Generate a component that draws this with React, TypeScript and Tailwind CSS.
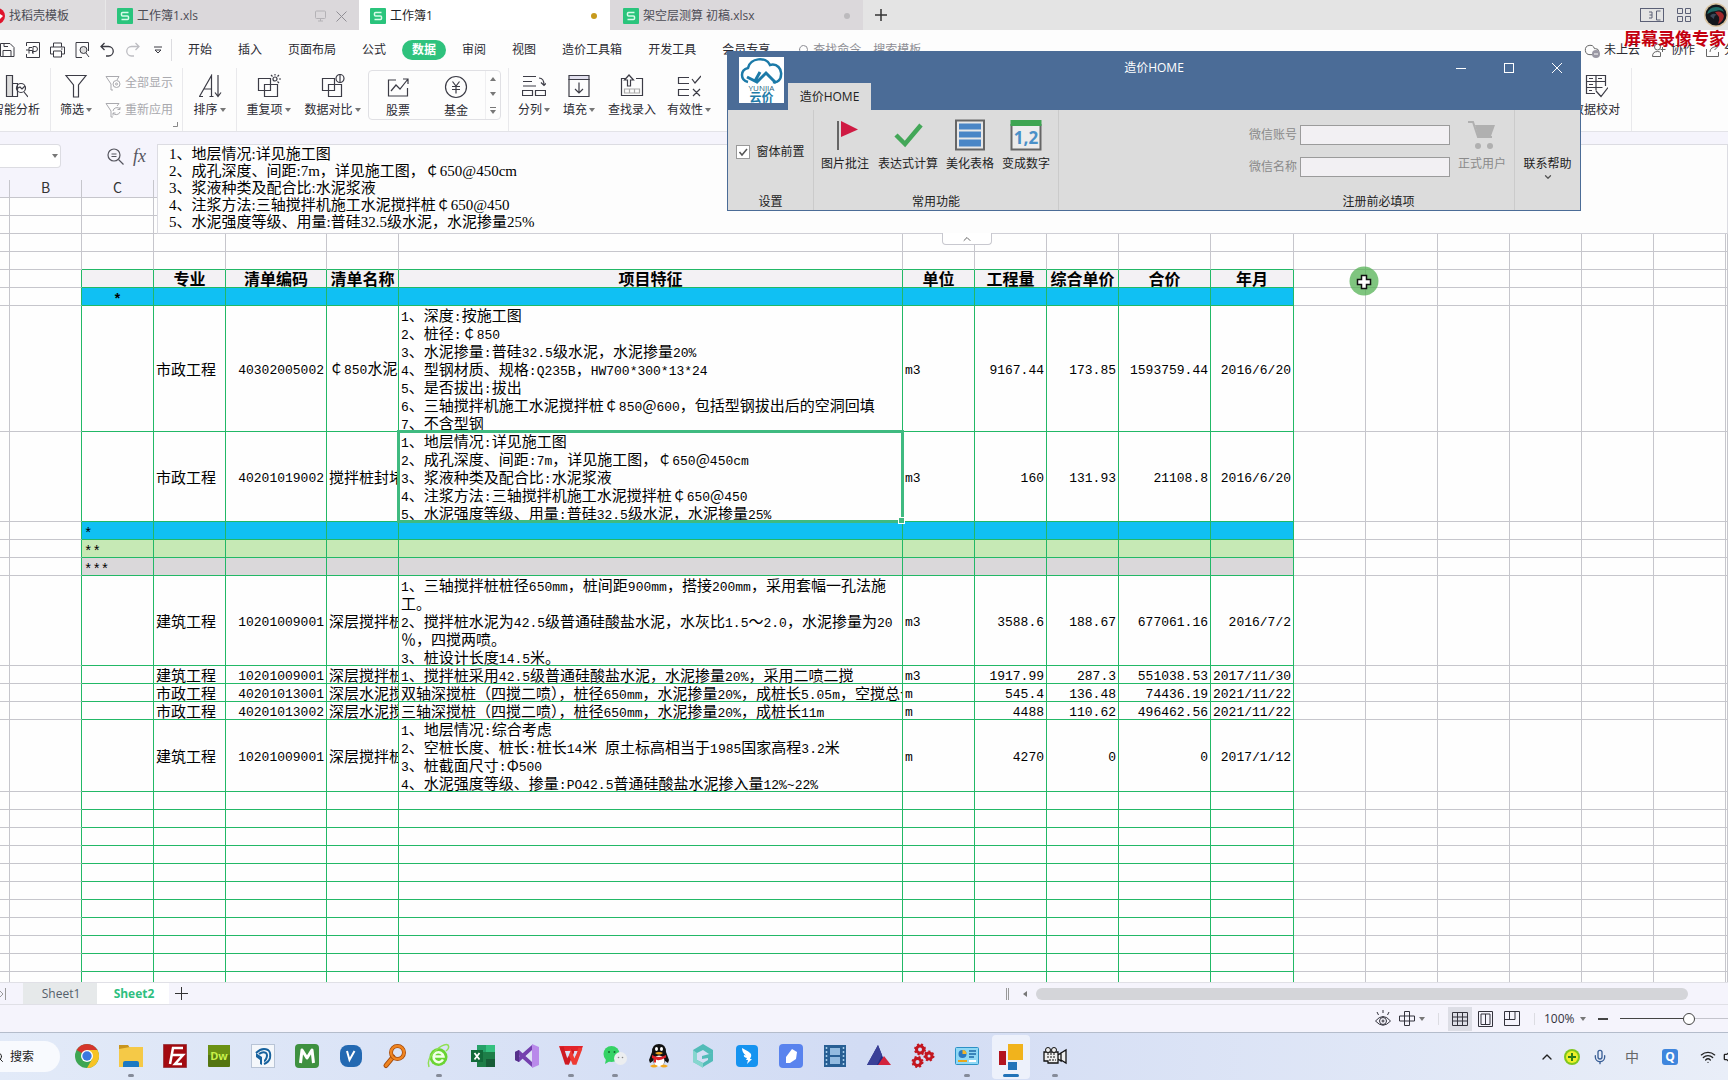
import React from 'react';
import { Cloud, Mic, Wifi, Volume2, Search, ChevronUp, ChevronDown } from 'lucide-react';

const UI_FONT = "font-['Open_Sans','Noto_Sans_CJK_SC',sans-serif]";
const LINE = { fill: 'none', stroke: 'currentColor' } as const;

/* ---------- small shared pieces ---------- */

const Caret = ({ className = '' }: { className?: string }) => (
  <svg className={`w-[6px] h-1 shrink-0 text-[#777] ${className}`} viewBox="0 0 6 4">
    <path d="M0 0h6L3 4z" fill="currentColor" />
  </svg>
);

const SheetLogo = () => (
  <svg className="w-4 h-4 shrink-0" viewBox="0 0 16 16">
    <rect width="16" height="16" rx="1" fill="#2ac47c" />
    <path d="M11.500 4.500h-6a1 1 0 0 0-1 1V7a1 1 0 0 0 1 1h5a1 1 0 0 1 1 1v1.500a1 1 0 0 1-1 1h-6" fill="none" stroke="#d8fbe8" strokeWidth="1.500" />
  </svg>
);

const Divider = ({ className = 'h-16' }: { className?: string }) => (
  <div className={`w-px shrink-0 bg-[#e9e9ec] ${className}`} />
);

/* ---------- document tabs ---------- */

const TabBar = () => (
  <div className="flex h-[30px] shrink-0 bg-[#e4e4e4] text-xs text-[#4c4c55] overflow-hidden">
    <button className="flex items-center w-[106px] shrink-0 pt-[2px] bg-[#dedcde] border-r border-[#e8e8e8]">
      <svg className="w-[5px] h-4 mr-1" viewBox="0 0 5 16">
        <circle cx="-3" cy="8" r="8" fill="#e0142c" />
        <path d="M0 6l3 2-3 3z" fill="#fff" />
      </svg>
      找稻壳模板
    </button>
    <div className="flex items-center w-[253px] shrink-0 bg-[#dbd8db] pt-[2px] pl-[11px] pr-3">
      <SheetLogo />
      <button className="ml-1">工作簿1.xls</button>
      <svg className="w-[11px] h-3 ml-auto text-[#b4b2b6]" viewBox="0 0 11 12" {...LINE}>
        <rect x=".5" y="1" width="10" height="7.500" rx="1" />
        <path d="M3 11h5M5.500 8.500V11" />
      </svg>
      <button aria-label="关闭" className="ml-[10px]">
        <svg className="w-[11px] h-[11px] text-[#908e94]" viewBox="0 0 11 11" {...LINE}>
          <path d="M.5.5l10 10M10.500.5l-10 10" />
        </svg>
      </button>
    </div>
    <div className="flex items-center w-[251px] shrink-0 bg-white text-[#1f1f24] pt-[2px] pl-[11px] pr-[13px]">
      <SheetLogo />
      <button className="ml-1">工作簿1</button>
      <span className="w-[6px] h-[6px] ml-auto rounded-full bg-[#c79a1c]" />
    </div>
    <div className="flex items-center w-[253px] shrink-0 bg-[#dbd8db] pt-[2px] pl-[13px] pr-[13px]">
      <SheetLogo />
      <button className="ml-1">架空层测算 初稿.xlsx</button>
      <span className="w-[6px] h-[6px] ml-auto rounded-full bg-[#bcbabd]" />
    </div>
    <button aria-label="新建" className="ml-3">
      <svg className="w-3 h-3 text-[#333]" viewBox="0 0 12 12" {...LINE} strokeWidth="1.500">
        <path d="M6 0v12M0 6h12" />
      </svg>
    </button>
    <div className="flex items-center ml-auto w-[88px] shrink-0 text-[#5b6076]">
      <svg className="w-6 h-[14px] shrink-0" viewBox="0 0 24 14" {...LINE}>
        <rect x=".5" y=".5" width="23" height="13" />
        <path d="M20.500 3h-4v9h4" />
        <path d="M9 4h3v6H9M9.500 7H12" />
      </svg>
      <svg className="w-[14px] h-[14px] ml-[13px] shrink-0" viewBox="0 0 14 14" {...LINE}>
        <path d="M.5.5h5v5h-5zM8.500.5h5v5h-5zM.5 8.500h5v5h-5zM8.500 8.500h5v5h-5z" />
      </svg>
      <svg className="w-6 h-6 ml-[13px] shrink-0" viewBox="0 0 24 24">
        <circle cx="12" cy="12" r="12" fill="#d8c3a0" />
        <circle cx="12" cy="12" r="10.500" fill="#12161c" />
        <path d="M3 11q2-7 9-7 6 0 8 5-4-3-8-1-4 0-9 3z" fill="#1c6b66" />
        <path d="M11 9q7-2 9 4-1 6-6 8 2-4 1-7z" fill="#a2282b" />
        <path d="M6 13q3-4 7-1-3 0-3 4z" fill="#3b4858" />
      </svg>
    </div>
  </div>
);

/* ---------- menu row ---------- */

const MENU_LEFT = ['开始', '插入', '页面布局', '公式'];
const MENU_RIGHT = ['审阅', '视图', '造价工具箱', '开发工具', '会员专享'];

const MenuRow = () => (
  <div className="flex items-center h-[38px] pt-[2px] shrink-0 text-xs text-[#2b2b33] overflow-hidden">
    <div className="flex items-center w-[172px] h-[22px] shrink-0 border-r border-[#dcdce0] text-[#3a3a42]">
      <svg className="w-[15px] h-4" viewBox="0 0 15 16" {...LINE}>
        <path d="M.5 14.500V1.500h9.500l4 4v9H.5M3 14V8.500h8V14M4 1.500v3h4" />
      </svg>
      <svg className="w-[15px] h-4 ml-[10px]" viewBox="0 0 15 16" {...LINE}>
        <path d="M1.500 4V.5h13v15h-13V12M1 8h3M4 11.500V5.500h3M4 8.500h3.500V11M8 12V4.500h2a2.500 2.500 0 0 1 0 5H8" />
      </svg>
      <svg className="w-[15px] h-4 ml-[10px]" viewBox="0 0 15 16" {...LINE}>
        <path d="M3.500 5V1h8v4M3.500 12H.5V5h14v7h-3M3.500 9h8v6h-8zM11 7h1.500" />
      </svg>
      <svg className="w-[15px] h-4 ml-[10px]" viewBox="0 0 15 16" {...LINE}>
        <path d="M7 15.500H1V.5h12.500V9" />
        <circle cx="8.500" cy="8" r="3.500" fill="#ddd" />
        <path d="M11 11l3 4" />
      </svg>
      <svg className="w-[14px] h-4 ml-[10px]" viewBox="0 0 14 16" {...LINE} strokeWidth="1.300">
        <path d="M4.500 1L1 4.500 4.500 8M1 4.500h7.500a4.700 4.700 0 0 1 0 9.500H6" />
      </svg>
      <svg className="w-[14px] h-4 ml-3 text-[#bdbdc2]" viewBox="0 0 14 16" {...LINE} strokeWidth="1.300">
        <path d="M9.500 1L13 4.500 9.500 8M13 4.500H5.500a4.700 4.700 0 0 0 0 9.500H8" />
      </svg>
      <svg className="w-2 h-2 ml-[14px]" viewBox="0 0 8 8" {...LINE}>
        <path d="M0 1h8M1 4h6L4 7z" />
      </svg>
    </div>
    <nav className="flex items-center gap-[26px] pl-4 shrink-0">
      {MENU_LEFT.map((name) => (
        <button key={name}>{name}</button>
      ))}
      <button className="h-5 px-[10px] -mx-[10px] rounded-full bg-[#2fc27d] text-white font-bold">数据</button>
      {MENU_RIGHT.map((name) => (
        <button key={name}>{name}</button>
      ))}
    </nav>
    <label className="flex items-center ml-[27px] text-[#8d8d94]">
      <Search className="w-3 h-3 mr-1 -scale-x-100" strokeWidth={2} />
      <input className="w-[110px] outline-none placeholder:text-[#8d8d94]" placeholder="查找命令、搜索模板" />
    </label>
    <div className="flex items-center ml-auto w-[144px] shrink-0 whitespace-nowrap overflow-hidden [&>*]:shrink-0">
      <span className="relative w-4 h-4 mr-1 text-[#666]">
        <Cloud className="w-4 h-4" strokeWidth={1.5} />
        <svg className="absolute right-0 bottom-0 w-2 h-2" viewBox="0 0 8 8">
          <circle cx="4" cy="4" r="4" fill="#9a98a4" />
          <path d="M2 4h4" stroke="#fff" />
        </svg>
      </span>
      <button>未上云</button>
      <svg className="w-[14px] h-[14px] ml-3 mr-[5px] text-[#666]" viewBox="0 0 14 14" {...LINE}>
        <circle cx="5.500" cy="4" r="3" />
        <path d="M.5 13.500q0-5 5-5 2 0 3 1v4zM10.500 4v5M8.500 6.500h5" />
      </svg>
      <button>协作</button>
      <svg className="w-[14px] h-[14px] ml-[11px] mr-1 text-[#666]" viewBox="0 0 14 14" {...LINE}>
        <path d="M.5 6v7.500h12V9M4 9q0-5 7-5.500M8.500.5L12 3.500 8.500 7" />
      </svg>
      <button>分享</button>
    </div>
  </div>
);

/* ---------- ribbon ---------- */

interface ToolProps {
  label: string;
  width: string;
  caret?: boolean;
  children: React.ReactNode;
}

const Tool = ({ label, width, caret, children }: ToolProps) => (
  <button className={`flex flex-col items-center shrink-0 pt-[6px] whitespace-nowrap ${width}`}>
    <svg className="w-6 h-6 text-[#3c3c46]" viewBox="0 0 24 24" {...LINE} strokeWidth="1.200">
      {children}
    </svg>
    <span className="flex items-center justify-center mt-1 text-xs leading-4 text-[#2b2b33]">
      {label}
      {caret && <Caret className="ml-[2px]" />}
    </span>
  </button>
);

const Ribbon = () => (
  <div className="flex h-16 shrink-0 border-b border-[#e3e3e8] overflow-hidden">
    <div className="flex w-[50px] shrink-0 justify-end">
      <Tool label="智能分析" width="w-[68px]">
        <path d="M2.500 1.500h6v21h-6z" fill="#ddd" />
        <path d="M8.500 9.500h5v13h-5" />
        <circle cx="17" cy="14" r="4.500" />
        <path d="M20 18l4 5M12 15l4-2 2 2 3-3" />
      </Tool>
    </div>
    <Divider />
    <Tool label="筛选" width="w-[50px]" caret>
      <path d="M2 1.500h20l-7.500 9.500v12h-5V11z" />
    </Tool>
    <div className="relative flex flex-col w-[81px] shrink-0 pt-[6px] pl-1 gap-[9px] text-xs leading-[18px] text-[#a9a9ae]">
      <button className="flex items-center">
        <svg className="w-4 h-4 mr-1" viewBox="0 0 16 16" {...LINE}>
          <path d="M6 15V9L1 1.500h13L12 5M6 15h2" />
          <circle cx="11.500" cy="9" r="3.500" />
          <circle cx="11.500" cy="9" r="1" />
        </svg>
        全部显示
      </button>
      <button className="flex items-center">
        <svg className="w-4 h-4 mr-1" viewBox="0 0 16 16" {...LINE}>
          <path d="M6 15V9L1 1.500h13L12 4M6 15h2M8 9a4 4 0 0 1 7-2M15 10a4 4 0 0 1-7 1M15 5v2.500h-2.500M8 13.500V11h2.500" />
        </svg>
        重新应用
      </button>
      <svg className="absolute right-1 bottom-1 w-[5px] h-[5px] text-[#888]" viewBox="0 0 5 5" {...LINE}>
        <path d="M4.500 0v4.500H0" />
      </svg>
    </div>
    <Divider />
    <Tool label="排序" width="w-[53px]" caret>
      <path d="M1.500 22.500L13.500 1.500v21M6 15h7.500M1 22.500h4M11.500 22.500h4M20 1v21M17 18.500l3 4 3-4" />
    </Tool>
    <Divider />
    <Tool label="重复项" width="w-[63px]" caret>
      <path d="M1.500 4.500h12v12h-12zM7.500 10.500h13v12h-13z" />
      <circle cx="18" cy="5" r="2" />
      <path d="M18 0v1.500M22 1l-1.500 1.500M24 5h-2M22 9l-1.500-1.500M14 1l1.500 1.500" />
    </Tool>
    <Tool label="数据对比" width="w-[65px]" caret>
      <path d="M1.500 4.500h12v12h-12zM7.500 10.500h13v12h-13z" />
      <circle cx="19" cy="4.500" r="4" fill="#fff" />
      <path d="M19 .5v8" />
    </Tool>
    <div className="flex w-[133px] h-[50px] mt-[2px] ml-[3px] shrink-0 border border-[#e0e0e4] rounded-sm">
      <div className="flex -mt-[2px]">
        <Tool label="股票" width="w-[58px]">
          <path d="M10 5H2.500v16h19v-8M5 16l5-6 4 4 8-10M17 4h5v5" />
        </Tool>
        <Tool label="基金" width="w-[58px]">
          <circle cx="12" cy="12" r="10.500" />
          <path d="M8.500 6.500L12 11l3.500-4.500M12 11v7.500M8 11.500h8M8 14.500h8" />
        </Tool>
      </div>
      <div className="flex flex-col flex-1 items-center justify-around border-l border-[#efeff1]">
        <Caret className="rotate-180" />
        <Caret />
        <svg className="w-[6px] h-[7px] text-[#777]" viewBox="0 0 6 7">
          <path d="M0 0h6v1H0zM0 3h6L3 7z" fill="currentColor" />
        </svg>
      </div>
    </div>
    <Divider className="h-16 ml-[7px]" />
    <Tool label="分列" width="w-[50px]" caret>
      <path d="M1 2.500h13M1 7.500h9M1 12h13M17 4q5 0 5 7M19 8.500l3 3 3-3M.5 16.500h10v5H.5zM13.500 16.500h10v5h-10z" />
    </Tool>
    <Tool label="填充" width="w-[40px]" caret>
      <path d="M2 1.500h20v4H2z" fill="#e2e0ee" />
      <path d="M2 5.500h20v17H2zM12 8.500v10M8 15l4 4 4-4" />
    </Tool>
    <Tool label="查找录入" width="w-[66px]">
      <path d="M6 4.500H1.500v17h21v-17H16M7.500 12V6H4.500L9 1l4.500 5h-3v6z" />
      <path d="M4.500 15h15v4h-15zM9.500 15v4M14.500 15v4" stroke="#aaa" />
    </Tool>
    <Tool label="有效性" width="w-[48px]" caret>
      <path d="M12 3.500H1.500v6H12M12 15.500H1.500v6H12M15 5l3 4 6-7M16 15l7 7M23 15l-7 7" />
    </Tool>
    <div className="flex ml-auto w-[157px] shrink-0">
      <Tool label="数据校对" width="w-[50px]">
        <path d="M11 19.500H2.500v-18h19V12M2.500 7.500h19M2.500 13.500h16M12 1.500v15M5 4.500h4M14 4.500h4M5 10.500h4M5 16.500h3M12 17l5 5.500 7-9" />
      </Tool>
      <Divider className="h-16 ml-[10px]" />
    </div>
  </div>
);

/* ---------- formula bar ---------- */

const SELECTED_TEXT = [
  '1、地层情况:详见施工图',
  '2、成孔深度、间距:7m，详见施工图，￠650@450cm',
  '3、浆液种类及配合比:水泥浆液',
  '4、注浆方法:三轴搅拌机施工水泥搅拌桩￠650@450',
  '5、水泥强度等级、用量:普硅32.5级水泥，水泥掺量25%',
];

const FormulaBar = () => (
  <div className="relative z-10 flex h-12 shrink-0 pt-3 bg-[#f5f4fc]">
    <div className="flex items-center justify-end w-[61px] h-6 pr-[2px] bg-white border border-l-0 border-[#dcdce2] rounded-r-sm">
      <input aria-label="名称框" className="w-full min-w-0 outline-none" />
      <Caret />
    </div>
    <div className="flex items-center h-6 ml-[46px] text-[#55555e]">
      <svg className="w-[17px] h-[17px]" viewBox="0 0 17 17" {...LINE} strokeWidth="1.200">
        <circle cx="7" cy="7" r="6" />
        <path d="M11.500 11.500l5 5M4.500 6h5M4.500 8.500h5" />
      </svg>
      <span className="ml-[9px] text-lg leading-6 italic font-['Liberation_Serif',serif]">fx</span>
    </div>
    <div className="absolute left-[157px] right-0 top-3 h-[90px] bg-[#fdfdfd] border border-[#dcdce2] border-b-[#cfcfd6]">
      <textarea
        aria-label="编辑栏"
        readOnly
        className="block w-full h-[88px] pt-px pl-[11px] resize-none overflow-hidden outline-none text-[15px] leading-[17px] text-black font-['Liberation_Serif','Noto_Sans_CJK_SC',serif]"
        value={SELECTED_TEXT.join('\n')}
      />
    </div>
    <button aria-label="折叠编辑栏" className="absolute left-[942px] top-[101px] flex items-center justify-center w-[50px] h-3 bg-white border border-t-0 border-[#c8c8cf] rounded-b-sm">
      <ChevronUp className="w-3 h-3 text-[#666]" strokeWidth={2} />
    </button>
  </div>
);

/* ---------- worksheet ---------- */

// Latin runs use the half-width face, everything else the full-width one
const CellText = ({ text }: { text: string }) => (
  <span>
    {text.split(/([\x20-\x3f\x41-\x7e]+)/).map((run, i) =>
      i % 2 ? (
        <span key={i} className="font-['Liberation_Mono',monospace] text-[13px]">{run}</span>
      ) : (
        run
      )
    )}
  </span>
);

interface Item {
  height: string;
  major: string;
  code: string;
  name: string;
  detail: string[];
  unit: string;
  values: string[];
  selected?: boolean;
}

const HEADERS = ['', '专业', '清单编码', '清单名称', '项目特征', '单位', '工程量', '综合单价', '合价', '年月'];

const ITEMS_TOP: Item[] = [
  {
    height: 'h-[125px]',
    major: '市政工程',
    code: '40302005002',
    name: '￠850水泥搅拌桩',
    detail: [
      '1、深度:按施工图',
      '2、桩径:￠850',
      '3、水泥掺量:普硅32.5级水泥，水泥掺量20%',
      '4、型钢材质、规格:Q235B，HW700*300*13*24',
      '5、是否拔出:拔出',
      '6、三轴搅拌机施工水泥搅拌桩￠850@600，包括型钢拔出后的空洞回填',
      '7、不含型钢',
    ],
    unit: 'm3',
    values: ['9167.44', '173.85', '1593759.44', '2016/6/20'],
  },
  {
    height: 'h-[89px]',
    major: '市政工程',
    code: '40201019002',
    name: '搅拌桩封堵',
    detail: SELECTED_TEXT,
    unit: 'm3',
    values: ['160', '131.93', '21108.8', '2016/6/20'],
    selected: true,
  },
];

const ITEMS_BOTTOM: Item[] = [
  {
    height: 'h-[89px]',
    major: '建筑工程',
    code: '10201009001',
    name: '深层搅拌桩',
    detail: [
      '1、三轴搅拌桩桩径650mm，桩间距900mm，搭接200mm，采用套幅一孔法施',
      '工。',
      '2、搅拌桩水泥为42.5级普通硅酸盐水泥，水灰比1.5～2.0，水泥掺量为20',
      '％，四搅两喷。',
      '3、桩设计长度14.5米。',
    ],
    unit: 'm3',
    values: ['3588.6', '188.67', '677061.16', '2016/7/2'],
  },
  {
    height: 'h-[17px]',
    major: '建筑工程',
    code: '10201009001',
    name: '深层搅拌桩',
    detail: ['1、搅拌桩采用42.5级普通硅酸盐水泥，水泥掺量20%，采用二喷二搅'],
    unit: 'm3',
    values: ['1917.99', '287.3', '551038.53', '2017/11/30'],
  },
  {
    height: 'h-[17px]',
    major: '市政工程',
    code: '40201013001',
    name: '深层水泥搅拌桩',
    detail: ['双轴深搅桩（四搅二喷），桩径650mm，水泥掺量20%，成桩长5.05m，空搅总长'],
    unit: 'm',
    values: ['545.4', '136.48', '74436.19', '2021/11/22'],
  },
  {
    height: 'h-[17px]',
    major: '市政工程',
    code: '40201013002',
    name: '深层水泥搅拌桩',
    detail: ['三轴深搅桩（四搅二喷），桩径650mm，水泥掺量20%，成桩长11m'],
    unit: 'm',
    values: ['4488', '110.62', '496462.56', '2021/11/22'],
  },
  {
    height: 'h-[71px]',
    major: '建筑工程',
    code: '10201009001',
    name: '深层搅拌桩',
    detail: [
      '1、地层情况:综合考虑',
      '2、空桩长度、桩长:桩长14米 原土标高相当于1985国家高程3.2米',
      '3、桩截面尺寸:Φ500',
      '4、水泥强度等级、掺量:PO42.5普通硅酸盐水泥掺入量12%~22%',
    ],
    unit: 'm',
    values: ['4270', '0', '0', '2017/1/12'],
  },
];

const COLS = [
  'w-[10px]', 'w-[72px]', 'w-[72px]', 'w-[72px]', 'w-[101px]', 'w-[72px]', 'w-[504px]', 'w-[72px]', 'w-[72px]',
  'w-[72px]', 'w-[92px]', 'w-[83px]', 'w-[72px]', 'w-[72px]', 'w-[72px]', 'w-[72px]', 'w-[72px]', 'w-[72px]', '',
];

const GRAY = 'border-r border-b border-[#c6c6cc]';
const GREEN = 'border-r border-b border-[#22b866]';
const ONE = 'h-[17px]';

// cells A and B, B touching the green frame
const LeftCells = ({ framed = true }: { framed?: boolean }) => (
  <>
    <td className={GRAY} />
    <td className={framed ? `${GRAY} border-r-[#22b866]` : GRAY} />
  </>
);

const RightCells = () => (
  <>
    {COLS.slice(12).map((_, i) => (
      <td key={i} className={GRAY} />
    ))}
  </>
);

const BlankRow = ({ aboveFrame }: { aboveFrame?: boolean }) => (
  <tr>
    <LeftCells framed={false} />
    {HEADERS.map((_, i) => (
      <td key={i} className={aboveFrame ? `${GRAY} border-b-[#22b866]` : GRAY}>
        <div className={ONE} />
      </td>
    ))}
    <RightCells />
  </tr>
);

const BandRow = ({ mark, color, bold }: { mark: string; color: string; bold?: boolean }) => (
  <tr>
    <LeftCells />
    {HEADERS.map((_, i) => (
      <td key={i} className={`${GREEN} ${color}`}>
        <div className={`${ONE} px-[2px] text-sm leading-6 font-['Liberation_Mono',monospace] ${bold ? 'text-center font-bold' : ''}`}>
          {i === 0 && mark}
        </div>
      </td>
    ))}
    <RightCells />
  </tr>
);

const ItemRow = ({ item }: { item: Item }) => {
  const box = `${item.height} flex items-center px-[2px] overflow-hidden whitespace-nowrap leading-[17px]`;
  return (
    <tr>
      <LeftCells />
      <td className={GREEN} />
      <td className={GREEN}><div className={box}>{item.major}</div></td>
      <td className={GREEN}><div className={`${box} justify-end`}><CellText text={item.code} /></div></td>
      <td className={GREEN}><div className={box}><CellText text={item.name} /></div></td>
      <td className={`${GREEN} relative`}>
        <div className={`${item.height} px-[2px] overflow-hidden whitespace-pre leading-[18px]`}>
          {item.detail.map((line) => (
            <div key={line} className="h-[18px]"><CellText text={line} /></div>
          ))}
        </div>
        {item.selected && (
          <div className="absolute z-[1] -left-[2px] -right-[2px] -top-[2px] -bottom-[2px] border-[3px] border-[#3fba80]">
            <span className="absolute -right-[3px] -bottom-[3px] w-[5px] h-[5px] bg-[#3fba80] outline outline-white" />
          </div>
        )}
      </td>
      <td className={GREEN}><div className={box}><CellText text={item.unit} /></div></td>
      {item.values.map((value, i) => (
        <td key={i} className={GREEN}><div className={`${box} justify-end`}><CellText text={value} /></div></td>
      ))}
      <RightCells />
    </tr>
  );
};

const Worksheet = () => (
  <div className="relative flex-1 min-h-0 overflow-hidden bg-[#fefefe]">
    <table className="table-fixed w-full border-separate border-spacing-0 text-[15px] text-black font-['Noto_Sans_CJK_SC',sans-serif]">
      <colgroup>
        {COLS.map((w, i) => (
          <col key={i} className={w} />
        ))}
      </colgroup>
      <thead>
        <tr className="bg-[#f5f4fc]">
          {COLS.map((_, i) => (
            <th key={i} className="border-r border-b border-[#c6c6cc] font-normal">
              <div className="h-[17px] text-sm leading-[14px] text-[#333]">{i === 1 ? 'B' : i === 2 ? 'C' : ''}</div>
            </th>
          ))}
        </tr>
      </thead>
      <tbody>
        <BlankRow />
        <BlankRow />
        <BlankRow />
        <BlankRow aboveFrame />
        <tr>
          <LeftCells />
          {HEADERS.map((h, i) => (
            <th key={i} scope="col" className={`${GREEN} bg-[#f3f1f4]`}>
              <div className={`${ONE} text-base leading-[17px] font-bold whitespace-nowrap`}>{h}</div>
            </th>
          ))}
          <RightCells />
        </tr>
        <BandRow mark="*" color="bg-[#10c0f3]" bold />
        {ITEMS_TOP.map((item) => (
          <ItemRow key={item.code} item={item} />
        ))}
        <BandRow mark="*" color="bg-[#10c0f3]" />
        <BandRow mark="**" color="bg-[#c6e9b5]" />
        <BandRow mark="***" color="bg-[#dad8da]" />
        {ITEMS_BOTTOM.map((item, i) => (
          <ItemRow key={i} item={item} />
        ))}
        {Array.from({ length: 11 }, (_, r) => (
          <tr key={r}>
            <LeftCells />
            {HEADERS.map((_, i) => (
              <td key={i} className={GREEN}><div className={ONE} /></td>
            ))}
            <RightCells />
          </tr>
        ))}
      </tbody>
    </table>

    {/* mouse pointer with its highlight */}
    <svg className="absolute left-[1349px] top-[86px] w-[30px] h-[30px]" viewBox="0 0 30 30">
      <circle cx="15" cy="15" r="14.500" fill="#54b254" fillOpacity=".75" />
      <path d="M12.500 9.500h5v4h4v5h-4v4h-5v-4h-4v-5h4z" fill="#fff" stroke="#111" strokeWidth="1.500" />
    </svg>
  </div>
);

/* ---------- floating add-in window ---------- */

const HomeTool = ({ label, width, children }: { label: string; width: string; children: React.ReactNode }) => (
  <button className={`flex flex-col items-center shrink-0 whitespace-nowrap ${width}`}>
    <svg className="w-8 h-8" viewBox="0 0 32 32">{children}</svg>
    <span className="mt-[5px] leading-4">{label}</span>
  </button>
);

const AddinWindow = () => (
  <div className="absolute left-[727px] top-[51px] z-20 w-[854px] border border-[#4b6c97] bg-[#dcdcdc] text-xs text-[#222]">
    <div className="relative flex h-[58px] bg-[#4b6c97] text-white">
      <svg className="w-[45px] h-[46px] mt-[5px] ml-[11px] bg-white" viewBox="0 0 45 46">
        <path d="M9 25C1 23 1 13 9 11 11 1 27-1 31 8c7-2 12 4 11 10 0 5-4 8-8 7" fill="none" stroke="#1c7aa8" strokeWidth="2.500" />
        <path d="M37 26L27 16l-10 10M8 20l8 4 5-9" fill="none" stroke="#1c7aa8" strokeWidth="3" />
        <text x="22.500" y="34" textAnchor="middle" fontSize="8" fill="#1c5f80" fontFamily="Open Sans">YUNJIA</text>
        <text x="22.500" y="45" textAnchor="middle" fontSize="12" fontWeight="700" fill="#1c7aa8" fontFamily="Noto Sans CJK SC">云价</text>
      </svg>
      <button className="self-end h-[27px] w-[83px] ml-1 bg-[#dcdcdc] text-[#222]">造价HOME</button>
      <div className="absolute inset-x-0 top-2 text-center leading-4 pointer-events-none">造价HOME</div>
      <div className="flex -mr-px ml-auto h-8">
        <button aria-label="最小化" className="flex items-center justify-center w-12">
          <span className="w-[10px] h-px bg-white" />
        </button>
        <button aria-label="最大化" className="flex items-center justify-center w-12">
          <span className="w-[10px] h-[10px] border border-white" />
        </button>
        <button aria-label="关闭" className="flex items-center justify-center w-12">
          <svg className="w-[10px] h-[10px]" viewBox="0 0 10 10" {...LINE}>
            <path d="M0 0l10 10M10 0L0 10" />
          </svg>
        </button>
      </div>
    </div>
    <div className="flex h-[100px]">
      <div className="flex flex-col items-center justify-between w-[86px] border-r border-[#cbcbcb]">
        <label className="flex items-center gap-[6px] mt-[34px] leading-4">
          <span className="relative w-[14px] h-[14px]">
            <input type="checkbox" defaultChecked className="block appearance-none w-[14px] h-[14px] bg-white border border-[#999]" />
            <svg className="absolute inset-0 w-[14px] h-[14px] pointer-events-none text-[#555]" viewBox="0 0 14 14" {...LINE} strokeWidth="1.500">
              <path d="M3.500 7l2.500 3 5-6" />
            </svg>
          </span>
          窗体前置
        </label>
        <span className="leading-4">设置</span>
      </div>
      <div className="flex flex-col items-center justify-between w-[245px] border-r border-[#cbcbcb]">
        <div className="flex pt-[9px] pr-1">
          <HomeTool label="图片批注" width="w-[60px]">
            <path d="M9 2v29" stroke="#666" strokeWidth="2" />
            <path d="M12 2l17 8.500L12 18z" fill="#cf1b43" />
          </HomeTool>
          <HomeTool label="表达式计算" width="w-[66px]">
            <path d="M4 16l9 9L29 6" fill="none" stroke="#43a758" strokeWidth="4.500" />
          </HomeTool>
          <HomeTool label="美化表格" width="w-[58px]">
            <path d="M2 1.500h28v29H2z" fill="#e8e8e8" stroke="#666" strokeWidth="2" />
            <path d="M5 4.500h22v6H5zM5 12.500h22v6H5zM5 20.500h22v7H5z" fill="#4a86c6" />
          </HomeTool>
          <HomeTool label="变成数字" width="w-[54px]">
            <path d="M1.500 5v25.500h29V5" fill="#ececec" stroke="#666" strokeWidth="2" />
            <path d="M.5 1h31v6H.5z" fill="#3ea552" />
            <text x="16" y="25" textAnchor="middle" fontSize="17" fontWeight="700" fill="#4a90c8" fontFamily="Open Sans">1,2</text>
          </HomeTool>
        </div>
        <span className="leading-4">常用功能</span>
      </div>
      <div className="flex flex-col items-center justify-between ml-auto w-[272px] border-r border-[#cbcbcb] text-[#8a8a8a]">
        <div className="flex self-end pr-[5px] pt-[9px]">
          <div className="flex flex-col gap-3 pt-[6px] mr-[5px]">
            <label className="flex items-center gap-[3px]">
              微信账号
              <input className="w-[150px] h-5 bg-[#f2f0f3] border border-[#9b9b9b]" />
            </label>
            <label className="flex items-center gap-[3px]">
              微信名称
              <input className="w-[150px] h-5 bg-[#f2f0f3] border border-[#9b9b9b]" />
            </label>
          </div>
          <HomeTool label="正式用户" width="w-[54px]">
            <path d="M2 3h5l5 15h14" fill="none" stroke="#b0b0b0" strokeWidth="2" />
            <path d="M9 6h20l-4 11H12z" fill="#b0b0b0" />
            <circle cx="12" cy="27" r="3" fill="#b0b0b0" />
            <circle cx="24" cy="27" r="3" fill="#b0b0b0" />
          </HomeTool>
        </div>
        <span className="leading-4 text-[#222]">注册前必填项</span>
      </div>
      <button className="flex flex-col items-center w-[65px] pt-[46px]">
        <span className="leading-4">联系帮助</span>
        <ChevronDown className="w-[10px] h-[10px] text-[#555]" strokeWidth={3} />
      </button>
    </div>
  </div>
);

/* ---------- sheet tabs and status bar ---------- */

const SheetTabs = () => (
  <div className="flex items-center h-[23px] shrink-0 bg-[#f5f4fc] border-y border-[#e0e0e6] text-xs overflow-hidden">
    <svg className="w-[7px] h-3 mr-4 text-[#999]" viewBox="0 0 7 12" {...LINE}>
      <path d="M0 3l3 3-3 3M5.500 0v12" />
    </svg>
    <button className="w-[74px] h-full pl-[2px] bg-[#e6e9ea] text-[#55606a]">Sheet1</button>
    <button className="w-[72px] h-full pl-[2px] bg-white text-[#2fbf7f] font-bold">Sheet2</button>
    <button aria-label="新建工作表" className="ml-[6px]">
      <svg className="w-[13px] h-[13px] text-[#333]" viewBox="0 0 13 13" {...LINE}>
        <path d="M6.500 0v13M0 6.500h13" />
      </svg>
    </button>
    <div className="flex items-center ml-auto w-[722px] shrink-0">
      <span className="w-[3px] h-3 border-x border-[#999]" />
      <svg className="w-1 h-[6px] ml-[14px] text-[#777]" viewBox="0 0 4 6">
        <path d="M4 0v6L0 3z" fill="currentColor" />
      </svg>
      <span className="flex-1 h-3 ml-[9px] mr-10 rounded-full bg-[#d4d5d9]" />
    </div>
  </div>
);

const StatusBar = () => (
  <div className="flex items-center h-[27px] shrink-0 bg-[#f5f4fc] text-xs text-[#33333c] overflow-hidden">
    <div className="flex items-center ml-auto w-[353px] shrink-0 [&>*]:shrink-0">
      <svg className="w-4 h-[17px]" viewBox="0 0 16 17" {...LINE}>
        <path d="M.5 11Q8 2 15.500 11 8 19.500.5 11zM8 0v3M2 2l1.500 3M14 2l-1.500 3" />
        <circle cx="8" cy="11" r="3.500" />
        <circle cx="8" cy="11" r="1" />
      </svg>
      <svg className="w-4 h-[15px] ml-2" viewBox="0 0 16 15" {...LINE}>
        <path d="M5.500.5h5v14h-5zM.5 5h15v5H.5z" />
      </svg>
      <Caret className="ml-1" />
      <span className="w-px h-3 ml-[13px] bg-[#dcdce2]" />
      <button aria-label="普通视图" className="flex items-center justify-center w-6 h-6 ml-[9px] bg-[#dddee6]">
        <svg className="w-4 h-[14px]" viewBox="0 0 16 14" {...LINE}>
          <path d="M.5.5h15v13H.5zM.5 5h15M.5 9h15M5.500.5v13M10.500.5v13" />
        </svg>
      </button>
      <button aria-label="页面视图" className="ml-[6px]">
        <svg className="w-[15px] h-4" viewBox="0 0 15 16" {...LINE}>
          <path d="M.5.5h14v15H.5zM3 3h9v10.500H3zM7.500 3v10" />
        </svg>
      </button>
      <button aria-label="分页预览" className="ml-[11px]">
        <svg className="w-4 h-[15px]" viewBox="0 0 16 15" {...LINE}>
          <path d="M.5.5h15v14H.5zM.5 8.500h10.500V.5M5.500.5v8" />
        </svg>
      </button>
      <span className="w-px h-3 ml-[14px] bg-[#dcdce2]" />
      <button className="flex items-center ml-[9px]">
        100%
        <Caret className="ml-[5px]" />
      </button>
      <button aria-label="缩小" className="w-[10px] h-[2px] ml-3 bg-[#444]" />
      <input
        type="range"
        aria-label="缩放比例"
        defaultValue={50}
        className="appearance-none w-[138px] h-px ml-3 bg-linear-to-r from-[#444] from-50% to-[#c4c4cc] to-50% [&::-webkit-slider-thumb]:appearance-none [&::-webkit-slider-thumb]:w-3 [&::-webkit-slider-thumb]:h-3 [&::-webkit-slider-thumb]:rounded-full [&::-webkit-slider-thumb]:border [&::-webkit-slider-thumb]:border-[#444] [&::-webkit-slider-thumb]:bg-white"
      />
    </div>
  </div>
);

/* ---------- taskbar ---------- */

const LATIN = { textAnchor: 'middle', fontWeight: 700, fontFamily: 'Open Sans' } as const;

const APPS: { name: string; dot?: boolean; active?: boolean; icon: React.ReactNode }[] = [
  {
    name: 'Chrome',
    icon: (
      <>
        <circle cx="12" cy="12" r="12" fill="#3da653" />
        <path d="M12 12L1.600 6A12 12 0 0 1 22.400 6z" fill="#d5362c" />
        <path d="M12 6h10.400A12 12 0 0 1 12 24l5.200-9z" fill="#f7c325" />
        <circle cx="12" cy="12" r="6" fill="#fff" />
        <circle cx="12" cy="12" r="4.700" fill="#3a78e0" />
      </>
    ),
  },
  {
    name: '文件资源管理器',
    dot: true,
    icon: (
      <>
        <path d="M0 1h9l2 3v6H0z" fill="#c9951e" />
        <path d="M0 5l11-2h13v20H0z" fill="#f5c947" />
        <path d="M4 23v-4q0-2 2-2h12q2 0 2 2v4z" fill="#1b78c2" />
      </>
    ),
  },
  {
    name: 'FileZilla',
    icon: (
      <>
        <rect x=".5" y=".5" width="23" height="23" fill="#a30a10" stroke="#7c070b" strokeDasharray="1 1" />
        <path d="M7 20L10 4h10M8.500 11h7M13 11h7l-8 9h7" fill="none" stroke="#fff" strokeWidth="2.500" />
      </>
    ),
  },
  {
    name: 'Dreamweaver',
    icon: (
      <>
        <rect x="1" y="1" width="22" height="22" rx="1" fill="#547511" />
        <rect x="1" y="1" width="22" height="10" fill="#6b9114" />
        <text x="12" y="16" fontSize="11" fill="#c8f34a" {...LATIN}>Dw</text>
      </>
    ),
  },
  {
    name: 'SketchUp',
    icon: (
      <>
        <rect x=".5" y=".5" width="23" height="23" fill="#f4f7fb" stroke="#b8c4d6" />
        <path d="M5 9q6-6 12-3 3 2 2 8-1 4-6 6" fill="none" stroke="#17629e" strokeWidth="2" />
        <path d="M8 10q4-3 7-1 2 2 0 6-1 2-2 2" fill="none" stroke="#17629e" strokeWidth="2" />
        <path d="M5 9l6 4v8l-2-1v-4l-4-3z" fill="#17629e" />
      </>
    ),
  },
  {
    name: 'M',
    icon: (
      <>
        <rect width="24" height="24" rx="4" fill="#3e9140" />
        <path d="M5.500 19L7 6l5 8 5-8 1.500 13" fill="none" stroke="#fff" strokeWidth="3" strokeLinejoin="round" />
      </>
    ),
  },
  {
    name: 'V',
    icon: (
      <>
        <rect x="1" y="1" width="22" height="22" rx="8" fill="#2369b2" />
        <path d="M8 7l2.500 9 5-9" fill="none" stroke="#fff" strokeWidth="2" />
      </>
    ),
  },
  {
    name: 'Everything',
    icon: (
      <>
        <path d="M10 13L3 21.500" stroke="#a34a0c" strokeWidth="5" strokeLinecap="round" />
        <path d="M10 13L3 21.500" stroke="#ef8420" strokeWidth="3" strokeLinecap="round" />
        <circle cx="14.500" cy="8.500" r="6.500" fill="none" stroke="#a34a0c" strokeWidth="4" />
        <circle cx="14.500" cy="8.500" r="6.500" fill="none" stroke="#ef8420" strokeWidth="2.500" />
      </>
    ),
  },
  {
    name: '360浏览器',
    dot: true,
    icon: (
      <>
        <circle cx="11.500" cy="13" r="9" fill="#6ad433" />
        <path d="M16 15.500a5 5 0 1 1 .5-3H7" fill="none" stroke="#f2ffe9" strokeWidth="2.500" />
        <path d="M2 23Q-1 16 8 7 17-1 21 1q2 3-2 6" fill="none" stroke="#8fe052" strokeWidth="1.500" />
      </>
    ),
  },
  {
    name: 'Excel',
    icon: (
      <>
        <rect x="6" y="1" width="18" height="22" fill="#1e7e48" />
        <rect x="15" y="1" width="9" height="7" fill="#35c17f" />
        <rect x="6" y="1" width="9" height="7" fill="#26a269" />
        <rect x="15" y="15" width="9" height="8" fill="#175c37" />
        <rect y="6" width="12" height="12" fill="#126a3a" />
        <path d="M3.500 9l5 6.500M8.500 9l-5 6.500" stroke="#fff" strokeWidth="1.800" />
      </>
    ),
  },
  {
    name: 'Visual Studio',
    icon: (
      <>
        <path d="M17 0l7 3v18l-7 3z" fill="#b98aea" />
        <path d="M17 1v5L4 18l-4-2z M0 8l4-2 13 12v5z" fill="#7440ae" />
        <path d="M0 8l4-2v12l-4-2z" fill="#55308a" />
        <path d="M17 7v10l-6-5z" fill="#dfe3f5" />
      </>
    ),
  },
  {
    name: 'WPS',
    dot: true,
    icon: (
      <>
        <path d="M0 2h24l-2 5H2z" fill="#e3242b" />
        <path d="M2.500 3L8 20l6-14" fill="none" stroke="#cf1a22" strokeWidth="4" strokeLinejoin="bevel" />
        <path d="M10 6l5.500 14L21.500 4" fill="none" stroke="#ee3b33" strokeWidth="4" strokeLinejoin="bevel" />
        <path d="M7 7l2 6 2.500-6z" fill="#dbe3f6" />
        <path d="M15 7l1.500 5L18.500 7z" fill="#dbe3f6" />
      </>
    ),
  },
  {
    name: '微信',
    dot: true,
    icon: (
      <>
        <circle cx="8.500" cy="10" r="8" fill="#35d265" />
        <path d="M3 15l-1 5 5-3z" fill="#35d265" />
        <circle cx="6" cy="8" r="1" fill="#146b2e" />
        <circle cx="11.500" cy="8" r="1" fill="#146b2e" />
        <circle cx="17.500" cy="14.500" r="6.500" fill="#eceef0" />
        <circle cx="15.500" cy="13.500" r=".8" fill="#888" />
        <circle cx="19.500" cy="13.500" r=".8" fill="#888" />
      </>
    ),
  },
  {
    name: 'QQ',
    icon: (
      <>
        <path d="M12 0q7 0 7 8l3 8-1 3-3-2q-1 5-6 5t-6-5l-3 2-1-3 3-8q0-8 7-8z" fill="#111" />
        <ellipse cx="12" cy="17" rx="5.500" ry="5.500" fill="#fff" />
        <path d="M5 11q7 4 14 0v2.500q-7 4-10 2v3H7V15l-2-1z" fill="#da1f27" />
        <ellipse cx="9.500" cy="5" rx="1.500" ry="2" fill="#fff" />
        <ellipse cx="14.500" cy="5" rx="1.500" ry="2" fill="#fff" />
        <path d="M8 9q4-2 8 0-4 3-8 0zM3 22q4-3 8 0-4 3-8 0zM13 22q4-3 8 0-4 3-8 0z" fill="#f5a81c" />
      </>
    ),
  },
  {
    name: 'C',
    icon: (
      <>
        <path d="M12 0l10 6v3l-4 1-6-4-6 3v7l6 3 5-3v-2l-6 1v-3l11-3v8l-10 6L2 18V6z" fill="#52bcb8" />
        <path d="M2 6l4 3v7l6 3v5L2 18z" fill="#86d6cf" />
      </>
    ),
  },
  {
    name: '钉钉',
    icon: (
      <>
        <rect x="1" y="1" width="22" height="22" rx="4" fill="#1593f0" />
        <path d="M7 4q8 4 9 6t-1 5h2l-5 5 1-4h-2l1-2q-4-1-3-3l2 .500Q7 9 7 4z" fill="#fff" />
      </>
    ),
  },
  {
    name: '文档',
    icon: (
      <>
        <rect width="24" height="24" rx="4" fill="#5983ee" />
        <path d="M7 13l6-8 5 3-1 7-6 4H7z" fill="#fff" />
      </>
    ),
  },
  {
    name: '视频',
    icon: (
      <>
        <rect x="1" y="1" width="22" height="22" fill="#285f94" />
        <path d="M3.500 3v20M20.500 3v20" stroke="#a6cdea" strokeWidth="1.500" strokeDasharray="2 2" />
        <path d="M7 4h10v7H7zM7 13h10v7H7z" fill="#93bbe0" />
      </>
    ),
  },
  {
    name: 'A',
    icon: (
      <>
        <path d="M11 1l8 20H0z" fill="#252a82" />
        <path d="M11 1l4 10-5 10H0z" fill="#3a4097" />
        <path d="M17 12l7 9H11z" fill="#d3233d" />
      </>
    ),
  },
  {
    name: '设置工具',
    icon: (
      <>
        <circle cx="9" cy="5.500" r="3.500" fill="none" stroke="#c3161f" strokeWidth="3" />
        <circle cx="9" cy="5.500" r="5" fill="none" stroke="#c3161f" strokeWidth="2" strokeDasharray="2 2" />
        <circle cx="18" cy="12" r="3" fill="none" stroke="#c3161f" strokeWidth="3" />
        <circle cx="18" cy="12" r="4.500" fill="none" stroke="#c3161f" strokeWidth="2" strokeDasharray="2 2" />
        <circle cx="6.500" cy="18" r="3.500" fill="none" stroke="#c3161f" strokeWidth="3" />
        <circle cx="6.500" cy="18" r="5" fill="none" stroke="#c3161f" strokeWidth="2" strokeDasharray="2 2" />
      </>
    ),
  },
  {
    name: '控制面板',
    dot: true,
    icon: (
      <>
        <rect x=".5" y="3.500" width="23" height="17" rx="1" fill="#8fd8f5" stroke="#2b91c6" />
        <circle cx="7.500" cy="10" r="4" fill="#2a78c0" />
        <path d="M7.500 10V6a4 4 0 0 1 4 4z" fill="#f3b62a" />
        <path d="M14 7h7M14 10h7M14 13h5" stroke="#1e6aa8" strokeWidth="1.300" />
        <path d="M3 17h9" stroke="#e8a71b" strokeWidth="2" />
        <path d="M14 17h7" stroke="#fff" strokeWidth="2" />
      </>
    ),
  },
  {
    name: '造价HOME',
    active: true,
    icon: (
      <>
        <rect y="7" width="7" height="14" fill="#b3141f" />
        <rect x="9" width="15" height="16" fill="#f1b31c" />
        <rect x="9" y="18" width="9" height="8" fill="#2273b8" />
      </>
    ),
  },
  {
    name: '屏幕录像专家',
    dot: true,
    icon: (
      <>
        <path d="M1 8h14v11H5V17H1zM15 11l3-2v8l-3-2M18 9l5-3v13l-5-3z" fill="#eee" stroke="#111" strokeWidth="1.300" />
        <circle cx="5" cy="6" r="2.500" fill="#eee" stroke="#111" />
        <circle cx="11" cy="6" r="2.500" fill="#eee" stroke="#111" />
        <path d="M4 10h8M4 13h8M6 16h7" stroke="#111" strokeDasharray="2 1" />
      </>
    ),
  },
];

const Taskbar = () => (
  <div className="flex items-center h-12 shrink-0 border-t border-[#b4bccb] bg-linear-to-r from-[#e2eaf8] via-[#d2dcf4] to-[#e9eef8] text-xs text-[#222] overflow-hidden">
    <button className="flex items-center w-[60px] h-[31px] shrink-0 rounded-r-full bg-[#f8fafe]">
      <Search className="w-3 h-3 shrink-0 -ml-2 mr-[6px]" />
      搜索
    </button>
    <div className="flex ml-[5px]">
      {APPS.map((app) => (
        <button key={app.name} aria-label={app.name} className="relative flex items-center justify-center w-11 h-11 pb-[2px] shrink-0">
          {app.active && <span className="absolute inset-x-[3px] top-0 bottom-0 rounded bg-[#edf1fb]" />}
          <svg className="relative w-6 h-6 overflow-visible" viewBox="0 0 24 24">{app.icon}</svg>
          {app.dot && <span className="absolute bottom-[2px] w-[6px] h-[3px] rounded-full bg-[#858b99]" />}
          {app.active && <span className="absolute bottom-[2px] w-4 h-[3px] rounded-full bg-[#2273b8]" />}
        </button>
      ))}
    </div>
    <div className="flex items-center ml-auto w-[187px] shrink-0 [&>*]:shrink-0">
      <ChevronUp className="w-4 h-4 -ml-[2px]" />
      <svg className="w-4 h-4 ml-[9px]" viewBox="0 0 16 16">
        <circle cx="8" cy="8" r="8" fill="#7fc61e" />
        <circle cx="8" cy="8" r="6" fill="#eef02a" />
        <path d="M8 4v8M4 8h8" stroke="#2c7c1a" strokeWidth="2" />
      </svg>
      <Mic className="w-4 h-4 ml-3 text-[#3a5f96]" />
      <span className="ml-[17px] w-4 text-sm text-[#666]">中</span>
      <svg className="w-4 h-4 ml-[21px]" viewBox="0 0 16 16">
        <rect width="16" height="16" rx="3" fill="#3f86dd" />
        <text x="8" y="12" fontSize="12" fill="#fff" {...LATIN}>Q</text>
      </svg>
      <Wifi className="w-4 h-4 ml-[22px]" />
      <Volume2 className="w-4 h-4 ml-[7px]" />
    </div>
  </div>
);

const App: React.FC = () => (
  <div className={`relative flex flex-col h-screen overflow-hidden bg-[#fdfdfd] ${UI_FONT}`}>
    <TabBar />
    <MenuRow />
    <Ribbon />
    <FormulaBar />
    <Worksheet />
    <SheetTabs />
    <StatusBar />
    <Taskbar />
    <AddinWindow />
    <div className="absolute right-[2px] top-[28px] z-30 text-[17px] leading-5 font-bold text-[#c4000f] font-['Noto_Sans_CJK_SC',sans-serif] pointer-events-none">
      屏幕录像专家
    </div>
  </div>
);

export default App;
